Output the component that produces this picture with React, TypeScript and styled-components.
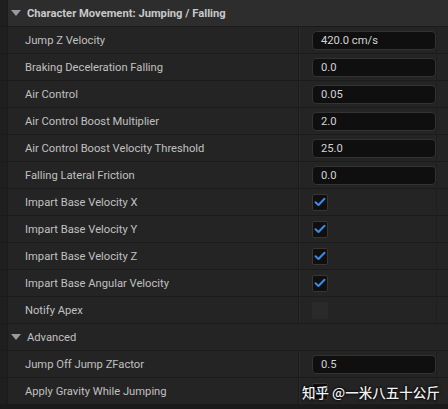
import React from "react";
import styled, { createGlobalStyle } from "styled-components";

const Global = createGlobalStyle`
  html, body { margin: 0; padding: 0; background: #1a1a1a; }
  body { font-family: Roboto, "Noto Sans", sans-serif; }
  * { box-sizing: border-box; }
`;

const Panel = styled.div`
  position: relative;
  width: 448px;
  height: 409px;
  background: #1a1a1a;
  overflow: hidden;
  display: flex;
  flex-direction: column;
`;

const Row = styled.div<{ $header?: boolean }>`
  flex-shrink: 0;
  height: 27px;
  border-bottom: 1px solid #1b1b1b;
  display: flex;
  background: ${(p) => (p.$header ? "#2d2d2d" : "#242424")};
`;

const Gutter = styled.div`
  flex-shrink: 0;
  width: 8px;
  background: #1f1f1f;
  border-right: 1px solid #1b1b1b;
`;

const LabelCell = styled.div<{ $header?: boolean; $bold?: boolean }>`
  flex: ${(p) => (p.$header ? "1 1 auto" : "0 0 290px")};
  display: flex;
  align-items: center;
  gap: 6px;
  padding-left: ${(p) => (p.$header ? "3px" : "17px")};
  font-size: 11.2px;
  font-weight: ${(p) => (p.$bold ? 700 : 400)};
  color: ${(p) => (p.$bold ? "#c8c8c8" : "#c0c0c0")};
  white-space: nowrap;
`;

const ValueCell = styled.div`
  flex: 0 0 138px;
  display: flex;
  align-items: center;
  border-left: 1px solid #1b1b1b;
  box-shadow: inset 1px 0 0 #2b2b2b;
  padding-left: 13px;
`;

const RightEdge = styled.div`
  flex: 1 1 auto;
  border-left: 1px solid #1f1f1f;
`;

const Input = styled.div`
  flex-shrink: 0;
  width: 124px;
  height: 19px;
  background: #0f0f0f;
  border: 1px solid #333333;
  border-radius: 4px;
  display: flex;
  align-items: center;
  padding-left: 8px;
  font-size: 11.2px;
  color: #d4d4d4;
`;

const Check = styled.div<{ $on?: boolean }>`
  flex-shrink: 0;
  width: 16px;
  height: 17px;
  border-radius: 2px;
  background: ${(p) => (p.$on ? "#0f0f0f" : "#2a2a2a")};
  border: 1px solid ${(p) => (p.$on ? "#3a3630" : "#2a2a2a")};
  display: flex;
  align-items: center;
  justify-content: center;
`;

const Tri = styled.span`
  width: 0;
  height: 0;
  border-left: 5px solid transparent;
  border-right: 5px solid transparent;
  border-top: 6px solid #9a9a9a;
`;

const Bottom = styled.div`
  flex: 1;
  background: #1a1a1a;
`;

const Watermark = styled.div`
  position: absolute;
  left: 302px;
  top: 382px;
  font-family: "Noto Sans CJK SC", sans-serif;
  font-size: 13.5px;
  font-weight: 500;
  color: #f2f2f2;
  text-shadow: 0 0 2px #000, 0 0 3px #000;
  white-space: nowrap;
`;

const CheckMark = () => (
  <svg width="12" height="10" viewBox="0 0 12 10">
    <path d="M1.5 5.2 L4.5 8 L10.5 1.8" fill="none" stroke="#3a8be6" strokeWidth="2" strokeLinecap="round" strokeLinejoin="round" />
  </svg>
);

type Item = { label: string; value?: string; check?: boolean };

const main: Item[] = [
  { label: "Jump Z Velocity", value: "420.0 cm/s" },
  { label: "Braking Deceleration Falling", value: "0.0" },
  { label: "Air Control", value: "0.05" },
  { label: "Air Control Boost Multiplier", value: "2.0" },
  { label: "Air Control Boost Velocity Threshold", value: "25.0" },
  { label: "Falling Lateral Friction", value: "0.0" },
  { label: "Impart Base Velocity X", check: true },
  { label: "Impart Base Velocity Y", check: true },
  { label: "Impart Base Velocity Z", check: true },
  { label: "Impart Base Angular Velocity", check: true },
  { label: "Notify Apex", check: false },
];

const adv: Item[] = [
  { label: "Jump Off Jump ZFactor", value: "0.5" },
  { label: "Apply Gravity While Jumping", check: true },
];

const PropRow = ({ item }: { item: Item }) => (
  <Row>
    <Gutter />
    <LabelCell>{item.label}</LabelCell>
    <ValueCell>
      {item.value !== undefined ? (
        <Input>{item.value}</Input>
      ) : (
        <Check $on={item.check}>{item.check && <CheckMark />}</Check>
      )}
    </ValueCell>
    <RightEdge />
  </Row>
);

export default function App() {
  return (
    <Panel>
      <Global />
      <Row $header>
        <Gutter />
        <LabelCell $header $bold>
          <Tri />
          Character Movement: Jumping / Falling
        </LabelCell>
      </Row>
      {main.map((it) => (
        <PropRow key={it.label} item={it} />
      ))}
      <Row>
        <Gutter />
        <LabelCell $header>
          <Tri />
          Advanced
        </LabelCell>
      </Row>
      {adv.map((it) => (
        <PropRow key={it.label} item={it} />
      ))}
      <Bottom />
      <Watermark>知乎 @一米八五十公斤</Watermark>
    </Panel>
  );
}
